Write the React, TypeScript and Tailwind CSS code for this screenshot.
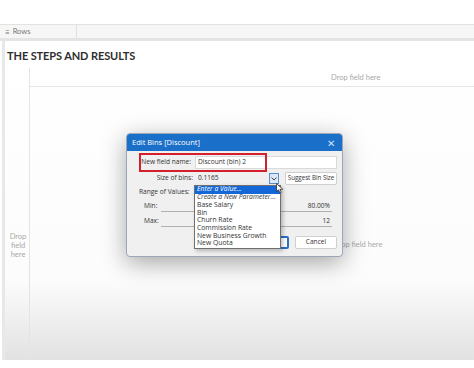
import React from 'react';

const items = [
  'Create a New Parameter...',
  'Base Salary',
  'Bin',
  'Churn Rate',
  'Commission Rate',
  'New Business Growth',
  'New Quota',
];

const EditBinsDialog: React.FC = () => {
  return (
    <div
      className="absolute left-[126px] top-[133px] w-[217px] h-[124px] rounded-[4px] bg-[#f0f0f0] border border-[#9aa7b8] shadow-[0_6px_24px_rgba(0,0,0,0.35)]"
      style={{ fontFamily: '"Open Sans", "Noto Sans", sans-serif' }}
    >
      <div className="flex items-center justify-between h-[17px] bg-[#1a6fc9] rounded-t-[3px] px-[5px] text-white">
        <span className="text-[7.5px] leading-none">Edit Bins [Discount]</span>
        <span className="text-[10px] leading-none text-[#cfe3fb] pr-[2px]">✕</span>
      </div>

      <div className="relative text-[6.6px] leading-none text-[#333]">
        {/* field name */}
        <div className="relative flex items-center h-[19px] mt-[2px]">
          <div className="absolute left-[12px] top-0 w-[128px] h-[19px] border-2 border-[#d4202a]" />
          <span className="w-[64px] text-right">New field name:</span>
          <div className="ml-[4px] w-[142px] h-[13px] bg-white border border-[#dadada] flex items-center pl-[2px]">
            Discount (bin) 2
          </div>
        </div>

        {/* size of bins */}
        <div className="flex items-center h-[13px]">
          <span className="w-[66px] text-right">Size of bins:</span>
          <span className="ml-[5px] w-[71px]">0.1165</span>
          <div className="w-[10px] h-[11px] border border-[#5b8fd1] bg-[#dbe8f8] flex items-center justify-center">
            <svg width="6" height="4" viewBox="0 0 6 4">
              <path d="M0.5 0.5 L3 3 L5.5 0.5" fill="none" stroke="#333" strokeWidth="0.9" />
            </svg>
          </div>
          <div className="ml-[6px] w-[52px] h-[13px] bg-white border border-[#cfcfcf] rounded-[2px] flex items-center justify-center text-[6.2px] whitespace-nowrap">
            Suggest Bin Size
          </div>
        </div>

        {/* range */}
        <div className="pl-[12px] mt-[2px] h-[10px] flex items-center">Range of Values:</div>

        <div className="flex items-center h-[15px] mt-[2px] pl-[17px]">
          <span className="w-[17px]">Min:</span>
          <div className="w-[171px] h-[11px] border-b border-[#b0b0b0] flex items-center justify-end pr-[2px]">80.00%</div>
        </div>
        <div className="flex items-center h-[15px] pl-[17px]">
          <span className="w-[17px]">Max:</span>
          <div className="w-[171px] h-[11px] border-b border-[#b0b0b0] flex items-center justify-end pr-[2px]">12</div>
        </div>

        {/* buttons */}
        <div className="flex mt-[7px] pl-[120px] gap-[6px]">
          <div className="w-[42px] h-[13px] bg-white border-2 border-[#2a6fc8] rounded-[2px] flex items-center justify-center">OK</div>
          <div className="w-[42px] h-[13px] bg-white border border-[#cfcfcf] rounded-[2px] flex items-center justify-center">Cancel</div>
        </div>

        {/* open dropdown */}
        <div className="absolute left-[67px] top-[32px] w-[87px] bg-white border border-[#6f6f6f] shadow-[2px_2px_4px_rgba(0,0,0,0.25)] text-[6.8px]">
          <div className="h-[7.7px] bg-[#1467d6] text-white italic pl-[2px] flex items-center">Enter a Value...</div>
          {items.map((it, i) => (
            <div key={it} className={`h-[7.7px] pl-[2px] flex items-center whitespace-nowrap ${i === 0 ? 'italic' : ''}`}>
              {it}
            </div>
          ))}
        </div>

        {/* mouse pointer */}
        <svg className="absolute left-[149px] top-[30px]" width="8" height="11" viewBox="0 0 8 11">
          <path d="M0.5 0.5 L0.5 8.5 L2.5 6.8 L4 10 L5.3 9.4 L3.9 6.3 L6.8 6.3 Z" fill="#fff" stroke="#222" strokeWidth="0.7" />
        </svg>
      </div>
    </div>
  );
};

const App: React.FC = () => {
  return (
    <div
      className="relative w-[474px] h-[368px] bg-white overflow-hidden"
      style={{ fontFamily: 'Lato, "Open Sans", sans-serif' }}
    >
      <div className="h-[24px]" />

      {/* rows shelf */}
      <div className="flex h-[17px] bg-[#f6f6f6] border-t border-[#e2e2e2] border-b-[3px] border-b-[#e4e4e4]">
        <div className="w-[77px] border-r border-[#e0e0e0] flex items-center pl-[5px] gap-[3px] text-[7.5px] text-[#777]">
          <span className="text-[8px] leading-none">≡</span>
          <span>Rows</span>
        </div>
        <div className="flex-1" />
      </div>

      {/* sheet */}
      <div className="ml-[2px] h-[319px] border-l-[3px] border-[#e8e8e8] bg-gradient-to-b from-white via-[#fcfcfc] via-75% to-[#e2e2e2] flex flex-col">
        <div className="pl-[2px] pt-[9px] text-[11px] font-bold text-[#2e2e2e] tracking-[-0.1px] leading-none h-[27px]">
          THE STEPS AND RESULTS
        </div>
        <div className="flex flex-1 ml-[2px]">
          <div className="w-[23px] border-r border-[#e4e4e4] flex items-end pb-[101px]">
            <div className="w-full text-center text-[7.5px] leading-[9px] text-[#a9a9a9]">
              Drop
              <br />
              field
              <br />
              here
            </div>
          </div>
          <div className="flex-1 flex flex-col">
            <div className="h-[19px] border-b border-[#e4e4e4] flex items-center pl-[301px] pt-[2px] text-[7.5px] text-[#a9a9a9]">
              Drop field here
            </div>
            <div className="flex-1 pt-[152px] pl-[303px] text-[7.5px] text-[#a9a9a9]">Drop field here</div>
          </div>
        </div>
      </div>

      <EditBinsDialog />
    </div>
  );
};

export default App;
